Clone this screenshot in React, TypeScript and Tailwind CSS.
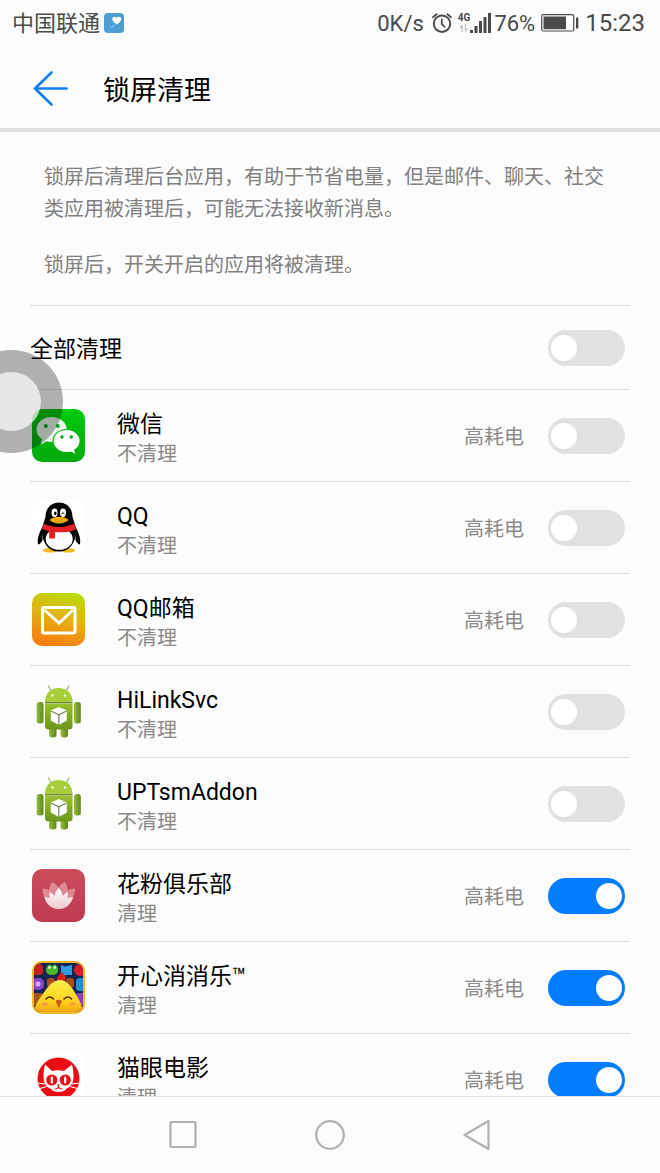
import { useState } from "react";
import type { ReactNode } from "react";

type AppItem = {
  id: string;
  name: string;
  icon: ReactNode;
  highPower?: boolean;
};

function WeChatIcon() {
  return (
    <svg viewBox="0 0 53 53" className="size-full">
      <defs>
        <linearGradient id="wechat" x1="0" y1="0" x2="0" y2="1">
          <stop offset="0" stopColor="#02cc0e" />
          <stop offset="1" stopColor="#03a90c" />
        </linearGradient>
      </defs>
      <rect width="53" height="53" rx="10" fill="url(#wechat)" />
      <path d="M19.500 8C11 8 4.500 13.600 4.500 20.500c0 4 2.200 7.300 5.500 9.600L9 35.500l5.500-3.300c1.600.5 3.300.7 5 .7 8.500 0 15.300-5.600 15.300-12.400S28 8 19.500 8z" fill="#e9f7e9" />
      <ellipse cx="13.800" cy="17" rx="1.900" ry="2" fill="#06a50e" />
      <ellipse cx="25.800" cy="17" rx="1.900" ry="2" fill="#06a50e" />
      <path d="M34.600 20.500c-7.600 0-13.600 5.200-13.600 11.600s6 11.600 13.600 11.600c1.600 0 3-.2 4.400-.6l5 2.800-1.200-4.800c3.300-2.200 5.400-5.400 5.400-9 0-6.400-6-11.600-13.600-11.600z" fill="#fff" stroke="#03b40c" strokeWidth="1.200" />
      <circle cx="30" cy="28" r="1.700" fill="#06a50e" />
      <circle cx="39.200" cy="28" r="1.700" fill="#06a50e" />
    </svg>
  );
}

function QQIcon() {
  return (
    <svg viewBox="0 0 53 53" className="size-full">
      <rect width="53" height="53" rx="10" fill="#fff" />
      <ellipse cx="18" cy="49.300" rx="7" ry="2.300" fill="#f2b91c" />
      <ellipse cx="36" cy="49.300" rx="7" ry="2.300" fill="#f2b91c" />
      <path d="M10.500 26C7 32 5 38 6 43c.4 1.400 2.300-.5 4.500-3.600zM43.500 26c3.500 6 5.500 12 4.500 17-.4 1.400-2.300-.5-4.500-3.600z" fill="#000" />
      <path d="M27 1.500c-8 0-13.500 6-13.500 14.500L10 27c-.8 14 6 23.500 17 23.500S44.800 41 44 27l-3.500-11C40.500 7.500 35 1.500 27 1.500z" fill="#000" />
      <ellipse cx="27.200" cy="38" rx="13.500" ry="10.800" fill="#fff" />
      <ellipse cx="22.500" cy="11.800" rx="3" ry="4.200" fill="#fff" />
      <ellipse cx="31" cy="11.800" rx="3" ry="4.200" fill="#fff" />
      <ellipse cx="23.300" cy="12.300" rx="1.200" ry="1.900" fill="#000" />
      <path d="M29.400 13q1.500-2.600 3 0" fill="none" stroke="#000" strokeWidth="1" />
      <path d="M17.500 19c2-2.400 6-2.900 9.500-2.900s7.500.5 9.500 2.900c-2 2-6 3.600-9.500 3.600s-7.500-1.600-9.500-3.600z" fill="#f7a815" />
      <path d="M11.500 22.500C20 27 34 27 42.500 22.500l1.500 6c-5.500 2.500-13 3.200-21 2.700v6.300h-5.800v-7L10 28z" fill="#e31e26" />
    </svg>
  );
}

function QQMailIcon() {
  return (
    <svg viewBox="0 0 53 53" className="size-full">
      <defs>
        <linearGradient id="mail" x1=".75" y1="0" x2=".45" y2="1">
          <stop offset="0" stopColor="#b9dc05" />
          <stop offset=".45" stopColor="#e3b414" />
          <stop offset="1" stopColor="#f77e10" />
        </linearGradient>
      </defs>
      <rect width="53" height="53" rx="10" fill="url(#mail)" />
      <g fill="none" stroke="#fff" strokeWidth="3">
        <rect x="10.500" y="14.500" width="32.500" height="25.500" rx="1.500" />
        <path d="M12.500 17 27 30 41 17" />
      </g>
    </svg>
  );
}

function AndroidIcon() {
  return (
    <svg viewBox="0 0 53 53" className="size-full">
      <defs>
        <linearGradient id="droid" x1="0" y1="0" x2="0" y2="1">
          <stop offset="0" stopColor="#98c22f" />
          <stop offset="1" stopColor="#6a951a" />
        </linearGradient>
        <linearGradient id="droidLimb" x1="0" y1="0" x2="1" y2="0">
          <stop offset="0" stopColor="#95bd3b" />
          <stop offset="1" stopColor="#5e8716" />
        </linearGradient>
      </defs>
      <path d="m16.500 1 3.500 6M37 1l-3.500 6" stroke="#9aab78" strokeWidth="1.200" strokeLinecap="round" />
      <rect x="17" y="40" width="7.500" height="12.500" rx="3" fill="url(#droidLimb)" />
      <rect x="28.500" y="40" width="7.500" height="12.500" rx="3" fill="url(#droidLimb)" />
      <rect x="4.700" y="17" width="6.800" height="21.500" rx="2.500" fill="url(#droidLimb)" />
      <rect x="42" y="17" width="6.800" height="21.500" rx="2.500" fill="url(#droidLimb)" />
      <path d="M13 17C13 8.500 18.500 3 26.700 3S40.500 8.500 40.500 17z" fill="#a6cf3a" />
      <circle cx="20.500" cy="10.500" r="1.300" fill="#f2f8dc" />
      <circle cx="33" cy="10.500" r="1.300" fill="#f2f8dc" />
      <path d="M13 18.500h27.500V41q0 3.500-3.500 3.500H16.500Q13 44.500 13 41z" fill="url(#droid)" />
      <path d="M13 17.700h27.500" stroke="#4e6d16" strokeWidth="1" />
      <path d="m26.800 22 8 3.500v10l-8 4.500-8-4.500v-10z" fill="#fff" />
      <path d="m19 26 7.800 3.800 7.800-3.800M26.800 29.800V40" fill="none" stroke="#71865a" strokeWidth="1.200" />
    </svg>
  );
}

function LotusIcon() {
  return (
    <svg viewBox="0 0 53 53" className="size-full">
      <defs>
        <linearGradient id="lotusBg" x1="0" y1="0" x2="0" y2="1">
          <stop offset="0" stopColor="#c94d5a" />
          <stop offset="1" stopColor="#bf3a50" />
        </linearGradient>
        <linearGradient id="lotus" x1="0" y1="0" x2="0" y2="1">
          <stop offset="0" stopColor="#fff" />
          <stop offset="1" stopColor="#ecc9cb" />
        </linearGradient>
      </defs>
      <rect width="53" height="53" rx="10" fill="url(#lotusBg)" />
      <g fill="#e6a0a6" fillOpacity=".75">
        <path d="M20 13c4 1.500 7 5 7.500 9.500L24 32l-7-6c-.5-5 .8-9.500 3-13z" />
        <path d="M33 13c-4 1.500-7 5-7.500 9.500L29 32l7-6c.5-5-.8-9.500-3-13z" />
        <path d="M10.500 19.500c4.500 0 8 1.500 10 5L22 36c-7-2-11.500-8-11.500-16.500z" />
        <path d="M43 19.500c-4.500 0-8 1.500-10 5L31 36c7-2 12-8 12-16.500z" />
      </g>
      <path d="M26.700 19c2.200 2.400 3.600 5 4 8 1.300-1.700 3-3 5-3.600.3 2 .2 4-.4 5.800 1.700-.8 3.600-1.100 5.700-.8-2 7-7.500 11.600-14.300 11.600S14.400 35.400 12.400 28.400c2-.3 4 0 5.700.8-.6-1.800-.7-3.800-.4-5.800 2 .6 3.700 1.900 5 3.600.4-3 1.800-5.600 4-8z" fill="url(#lotus)" />
    </svg>
  );
}

function ChickIcon() {
  return (
    <svg viewBox="0 0 53 53" className="size-full">
      <defs>
        <clipPath id="chickClip">
          <rect x="2" y="2" width="49" height="49" rx="8" />
        </clipPath>
        <linearGradient id="chick" x1="0" y1="0" x2="0" y2="1">
          <stop offset="0" stopColor="#fff04e" />
          <stop offset=".6" stopColor="#fdd21c" />
          <stop offset="1" stopColor="#ee9a10" />
        </linearGradient>
      </defs>
      <rect width="53" height="53" rx="10" fill="#f0b829" />
      <g clipPath="url(#chickClip)">
        <rect width="53" height="53" fill="#142552" />
        <rect x="0" y="3" width="11" height="11" rx="4" fill="#c81e22" />
        <path d="M14 7q3-6 6-2 4-4 6 2 1 7-6 7t-6-7z" fill="#47b72f" />
        <circle cx="17.500" cy="6.500" r="1.300" fill="#fff" />
        <circle cx="22.800" cy="6.500" r="1.300" fill="#fff" />
        <path d="M29 4l4 1.500L40 4v10H29z" fill="#2f9fe0" />
        <circle cx="48" cy="9" r="6" fill="#d51f24" />
        <rect x="0" y="17" width="12" height="12" rx="5" fill="#8b43c4" />
        <circle cx="6" cy="23" r="2.500" fill="#d7a9ee" />
        <rect x="15" y="17" width="8" height="9" rx="3" fill="#a94f21" />
        <rect x="34" y="17" width="8" height="10" rx="3" fill="#a84a1e" />
        <rect x="44" y="17" width="10" height="13" rx="4" fill="#238fd8" />
        <rect x="0" y="32" width="12" height="12" rx="4" fill="#a45322" />
        <rect x="43" y="32" width="12" height="12" rx="4" fill="#8741bc" />
        <path d="M26 21c-2-3-1-6 1-6 0-4 5-5 5-1 3 0 2 5 0 7z" fill="#d7211c" />
        <path d="M28 19c6 0 10 5 14 11 4 7 8 13 8 18 0 4-3 6-8 6H11c-6 0-8-2-8-6 0-5 5-11 10-18 4-6 9-11 15-11z" fill="url(#chick)" />
        <path d="M14 38q3.500-4 7.500 0M32 38q4-4 7.500 0" fill="none" stroke="#5a3006" strokeWidth="1.600" strokeLinecap="round" />
        <ellipse cx="12.500" cy="43" rx="3" ry="1.800" fill="#f79b42" />
        <ellipse cx="40.500" cy="43" rx="3" ry="1.800" fill="#f79b42" />
        <path d="M23.500 40q3.300-2.500 6.600 0l-3.300 7z" fill="#cf5a12" />
      </g>
    </svg>
  );
}

function MaoyanIcon() {
  return (
    <svg viewBox="0 0 53 53" className="size-full">
      <rect width="53" height="53" rx="10" fill="#fff" />
      <circle cx="26.500" cy="25.500" r="21" fill="#ec0d14" />
      <path d="M13 11.500 20 18q6-1.500 12 0l8-6.500c1.300 5 1.700 10 1.300 15-.6 5-3.500 8-7.300 9.500-1.500 2.200-4.500 3-7.500 3s-6-.8-7.500-3c-3.800-1.500-6.700-4.500-7.300-9.500-.4-5 0-10 1.300-15z" fill="#fff" />
      <circle cx="19.800" cy="27" r="5.600" fill="#ec0d14" />
      <circle cx="33.200" cy="27" r="5.600" fill="#ec0d14" />
      <ellipse cx="19.800" cy="27" rx="1.200" ry="3.800" fill="#fff" />
      <ellipse cx="33.200" cy="27" rx="1.200" ry="3.800" fill="#fff" />
      <path d="M26.500 33q-.5 3.500-4 3M26.500 33q.5 3.500 4 3" fill="none" stroke="#ec0d14" strokeWidth="1.100" />
      <path d="M24.800 31.500h3.400l-1.700 2z" fill="#ec0d14" />
      <path d="m5 30 8 1M6.500 36l8-2.500M48 30l-8 1M46.500 36l-8-2.500" stroke="#fff" strokeWidth="1.200" />
    </svg>
  );
}

const apps: AppItem[] = [
  { id: "wechat", name: "微信", icon: <WeChatIcon />, highPower: true },
  { id: "qq", name: "QQ", icon: <QQIcon />, highPower: true },
  { id: "qqmail", name: "QQ邮箱", icon: <QQMailIcon />, highPower: true },
  { id: "hilink", name: "HiLinkSvc", icon: <AndroidIcon /> },
  { id: "uptsm", name: "UPTsmAddon", icon: <AndroidIcon /> },
  { id: "huafen", name: "花粉俱乐部", icon: <LotusIcon />, highPower: true },
  { id: "xiaoxiaole", name: "开心消消乐™", icon: <ChickIcon />, highPower: true },
  { id: "maoyan", name: "猫眼电影", icon: <MaoyanIcon />, highPower: true },
];

function Toggle({ id, checked, onChange }: { id: string; checked: boolean; onChange: () => void }) {
  return (
    <input
      id={id}
      type="checkbox"
      role="switch"
      checked={checked}
      onChange={onChange}
      className="mr-[5px] flex h-9 w-[77px] shrink-0 cursor-pointer appearance-none items-center rounded-full bg-[#e1e1e1] px-[3px] transition-colors before:size-[26px] before:rounded-full before:bg-white checked:justify-end checked:bg-[#007dff]"
    />
  );
}

function StatusBar() {
  return (
    <div className="flex h-[46px] shrink-0 items-center justify-between pr-[15px] pl-3 text-[22px] text-[#4a4a4a]">
      <div className="flex items-center gap-1">
        <span>中国联通</span>
        <svg viewBox="0 0 20 20" className="size-5">
          <rect width="20" height="20" rx="4" fill="#4b9fd3" />
          <path d="M12.800 11.500C10 9.500 8.300 8 8.300 6c0-2.600 3.200-3.200 4.500-1C14.200 2.800 17.300 3.400 17.300 6c0 2-1.700 3.500-4.500 5.500z" fill="#fff" />
          <path d="m6 13 1.500 1.500L10.500 12" fill="none" stroke="#a9d3ee" strokeWidth="1" />
        </svg>
      </div>
      <div className="flex items-center">
        <span>0K/s</span>
        <svg viewBox="0 0 20 20" className="ml-2 size-5" fill="none" stroke="#4a4a4a" strokeLinecap="round">
          <circle cx="10" cy="10.700" r="8.200" strokeWidth="2" />
          <path d="M9.800 6.500v4.700l2.700 2.400" strokeWidth="1.800" />
          <path d="M1 4.200 4.500 1.200M19 4.200 15.500 1.200" strokeWidth="1.800" />
        </svg>
        <div className="ml-[6px] flex h-5 flex-col items-center">
          <span className="text-[10px] leading-[10px] font-bold">4G</span>
          <svg viewBox="0 0 10 8" className="mt-px h-2 w-[10px]" fill="none" stroke="#bdbdbd">
            <path d="M3 8V1.500L1 3.500M6.500 0v6.500l2-2" strokeWidth="1.200" />
          </svg>
        </div>
        <svg viewBox="0 0 21 20" className="h-5 w-[21px]" fill="#4a4a4a">
          <rect x="0" y="17" width="3" height="3" />
          <rect x="4.500" y="13" width="3" height="7" />
          <rect x="9" y="8" width="3" height="12" />
          <rect x="13.500" y="4" width="3" height="16" />
          <rect x="18" y="0" width="3" height="20" />
        </svg>
        <span className="ml-[3px]">76%</span>
        <svg viewBox="0 0 38 18" className="ml-[6px] h-[18px] w-[38px]">
          <rect x=".7" y=".7" width="32" height="16.300" rx="1.500" fill="none" stroke="#4a4a4a" strokeWidth="1.200" />
          <rect x="2.500" y="2.500" width="22.500" height="12.700" fill="#4a4a4a" />
          <rect x="35" y="3.500" width="2.300" height="11" fill="#4a4a4a" />
        </svg>
        <time className="ml-[6px] text-2xl">15:23</time>
      </div>
    </div>
  );
}

export default function App() {
  const [cleaned, setCleaned] = useState<string[]>(["huafen", "xiaoxiaole", "maoyan"]);
  const allCleaned = cleaned.length === apps.length;

  const toggle = (id: string) =>
    setCleaned((prev) => (prev.includes(id) ? prev.filter((x) => x !== id) : [...prev, id]));

  return (
    <div className="relative flex h-screen flex-col overflow-hidden bg-[#fcfcfc] font-[Roboto,'Noto_Sans_CJK_SC',sans-serif] text-black">
      <StatusBar />

      <header className="flex h-[86px] shrink-0 items-center border-b-4 border-[#e0e0e0] pt-1 pl-[33px]">
        <button type="button" aria-label="返回" className="cursor-pointer">
          <svg viewBox="0 0 36 36" className="size-9" fill="none" stroke="#0f7ff2" strokeWidth="2.600" strokeLinecap="round" strokeLinejoin="round">
            <path d="M18.500 1.500 2 17.500 18.500 33.500M2 17.500h31.500" />
          </svg>
        </button>
        <h1 className="ml-[34px] pt-1 text-[27px]">锁屏清理</h1>
      </header>

      <main className="min-h-0 flex-1 overflow-y-auto px-[30px] [scrollbar-width:none]">
        <div className="border-b border-[#dedede] px-[14px] pt-[29px] pb-6 text-xl leading-8 text-[#808080]">
          <p>锁屏后清理后台应用，有助于节省电量，但是邮件、聊天、社交类应用被清理后，可能无法接收新消息。</p>
          <p className="mt-6">锁屏后，开关开启的应用将被清理。</p>
        </div>

        <div className="flex h-[84px] items-center justify-between border-b border-[#dedede]">
          <label htmlFor="all" className="pt-[6px] text-[23px]">全部清理</label>
          <Toggle
            id="all"
            checked={allCleaned}
            onChange={() => setCleaned(allCleaned ? [] : apps.map((a) => a.id))}
          />
        </div>

        <ul>
          {apps.map((app) => {
            const on = cleaned.includes(app.id);
            return (
              <li key={app.id} className="flex h-[92px] items-center border-b border-[#dedede]">
                <div className="ml-[2px] size-[53px] shrink-0">{app.icon}</div>
                <label htmlFor={app.id} className="ml-8 flex flex-1 flex-col pt-[6px]">
                  <span className="text-[23px] leading-[30px]">{app.name}</span>
                  <span className="text-xl leading-7 text-[#8a8a8a]">{on ? "清理" : "不清理"}</span>
                </label>
                {app.highPower && <span className="mr-6 pt-[3px] text-xl text-[#8a8a8a]">高耗电</span>}
                <Toggle id={app.id} checked={on} onChange={() => toggle(app.id)} />
              </li>
            );
          })}
        </ul>
      </main>

      <nav className="flex h-[77px] shrink-0 justify-center border-t border-[#dedede]">
        <div className="flex w-2/3">
          <button type="button" aria-label="最近任务" className="flex flex-1 items-center justify-center">
            <svg viewBox="0 0 30 30" className="size-[30px]" fill="none" stroke="#b0b0b0" strokeWidth="2.200">
              <rect x="2.500" y="2" width="25" height="25" rx="1" />
            </svg>
          </button>
          <button type="button" aria-label="主屏幕" className="flex flex-1 items-center justify-center">
            <svg viewBox="0 0 30 30" className="size-[30px]" fill="none" stroke="#b0b0b0" strokeWidth="2.200">
              <circle cx="15" cy="15" r="13.800" />
            </svg>
          </button>
          <button type="button" aria-label="返回上一页" className="flex flex-1 items-center justify-center">
            <svg viewBox="0 0 30 30" className="size-[30px]" fill="none" stroke="#b0b0b0" strokeWidth="2.200" strokeLinejoin="round">
              <path d="M2.500 15 26.500 1v28z" />
            </svg>
          </button>
        </div>
      </nav>

      {/* floating assistive ball, half hidden behind the left edge */}
      <button
        type="button"
        aria-label="悬浮球"
        className="absolute top-[350px] -left-10 flex size-[103px] items-center justify-center rounded-full bg-black/30"
      >
        <span className="size-[59px] rounded-full bg-white/70" />
      </button>
    </div>
  );
}
